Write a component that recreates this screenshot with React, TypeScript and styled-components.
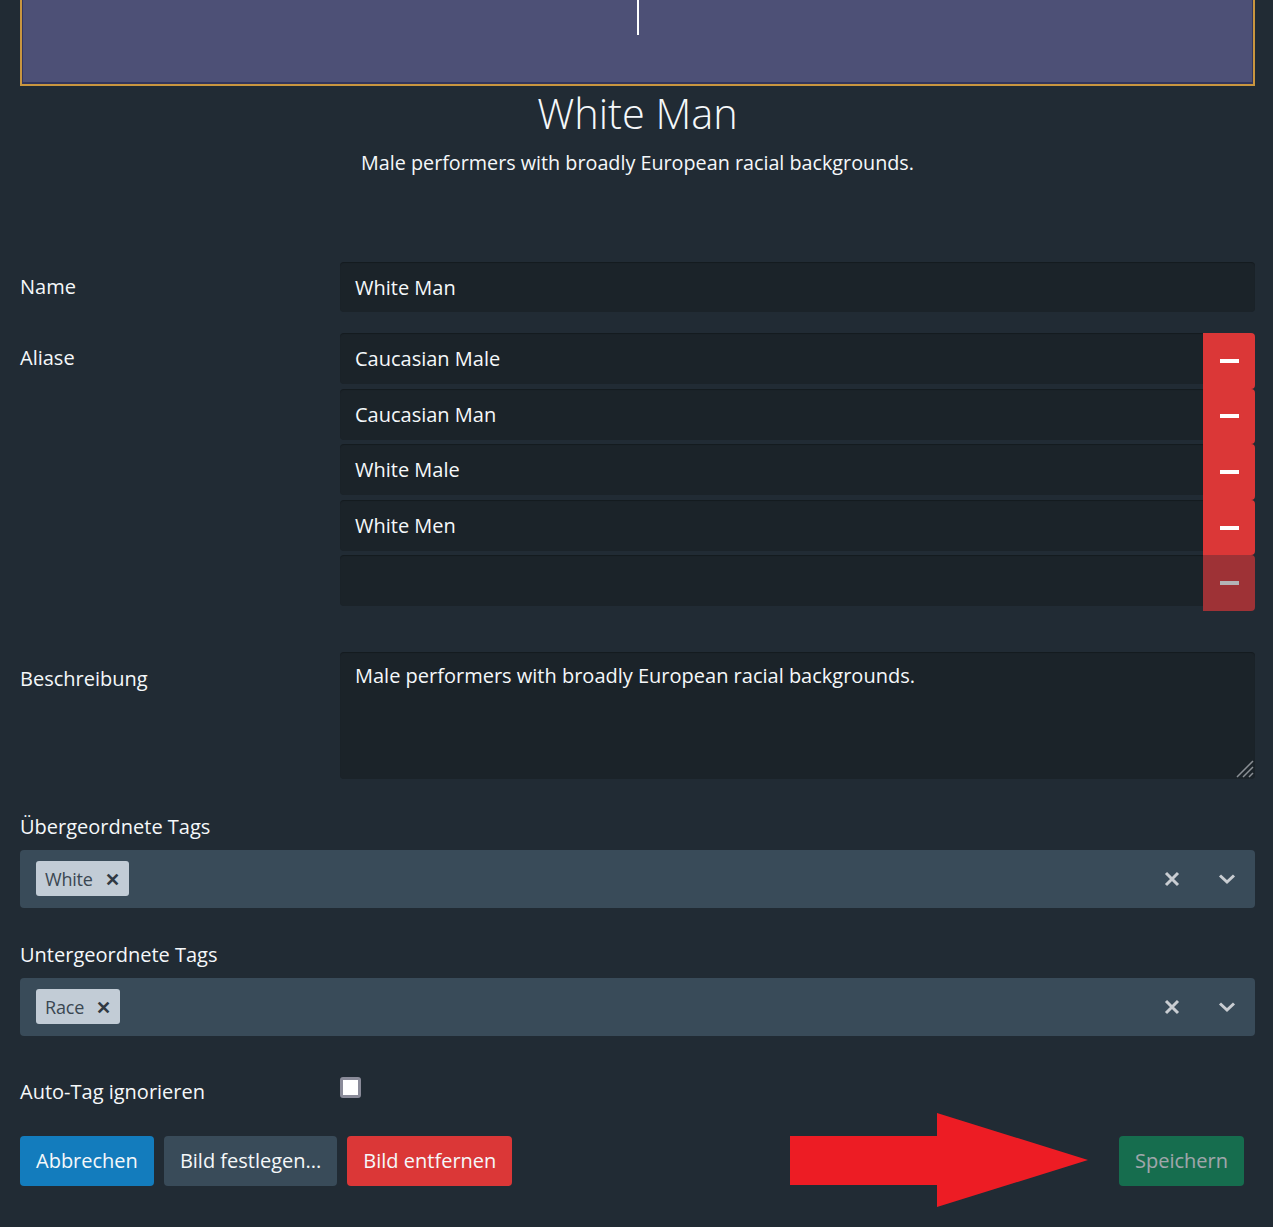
import React from "react";
import styled, { createGlobalStyle } from "styled-components";

const Global = createGlobalStyle`
  html, body { margin: 0; padding: 0; background: #212b34; }
  body { font-family: "Open Sans", "Noto Sans", sans-serif; color: #f5f8fa; }
`;

const Page = styled.div`
  width: 1273px;
  height: 1227px;
  box-sizing: border-box;
  padding: 0 18px 0 20px;
  overflow: hidden;
  font-size: 20px;
`;

const Banner = styled.div`
  height: 86px;
  box-sizing: border-box;
  background: #4d5076;
  border: 2px solid #c9963f;
  border-top: none;
  box-shadow: inset 0 -2px 0 #33365c, inset 1px 0 0 #33365c, inset -1px 0 0 #33365c;
  display: flex;
  justify-content: center;
`;

const Caret = styled.div`
  width: 2px;
  height: 35px;
  background: #ffffff;
`;

const Title = styled.h2`
  margin: 3px 0 0;
  text-align: center;
  font-size: 41.5px;
  line-height: 48px;
  font-weight: 300;
`;

const Lead = styled.p`
  margin: 11px 0 0;
  text-align: center;
  font-size: 19.75px;
  line-height: 30px;
`;

const Form = styled.div`
  margin-top: 84px;
  display: flex;
  flex-direction: column;
`;

const Row = styled.div<{ $mb: number }>`
  display: grid;
  grid-template-columns: 320px 1fr;
  margin-bottom: ${(p) => p.$mb}px;
`;

const Label = styled.div<{ $pt?: number }>`
  padding-top: ${(p) => p.$pt ?? 10}px;
  font-size: 20px;
  line-height: 30px;
`;

const Input = styled.div`
  height: 50px;
  box-sizing: border-box;
  background: #1b2329;
  border-radius: 4px;
  box-shadow: inset 0 1px 1px rgba(0, 0, 0, 0.25);
  padding: 0 15px;
  display: flex;
  align-items: center;
  font-size: 20px;
  flex: 1;
`;

const AliasList = styled.div`
  display: flex;
  flex-direction: column;
`;

const AliasRow = styled.div`
  display: flex;
  height: 55.6px;
  align-items: flex-start;
`;

const AliasInput = styled(Input)`
  height: 51px;
  border-radius: 4px 0 0 4px;
`;

const RemoveBtn = styled.div<{ $disabled?: boolean }>`
  width: 52px;
  height: 100%;
  background: ${(p) => (p.$disabled ? "#9e3236" : "#db3737")};
  border-radius: 0 4px 4px 0;
  display: flex;
  align-items: center;
  justify-content: center;
`;

const Minus = styled.div<{ $disabled?: boolean }>`
  width: 19px;
  height: 4px;
  background: ${(p) => (p.$disabled ? "#b3b3b6" : "#ffffff")};
`;

const TextArea = styled.div`
  height: 127px;
  box-sizing: border-box;
  background: #1b2329;
  border-radius: 4px;
  box-shadow: inset 0 1px 1px rgba(0, 0, 0, 0.25);
  padding: 9px 15px;
  font-size: 20px;
  line-height: 30px;
  position: relative;
`;

const Grip = styled.svg`
  position: absolute;
  right: 1px;
  bottom: 1px;
`;

const Stack = styled.div<{ $mb: number }>`
  display: flex;
  flex-direction: column;
  margin-bottom: ${(p) => p.$mb}px;
`;

const StackLabel = styled.div`
  font-size: 20px;
  line-height: 30px;
  margin-bottom: 8px;
`;

const Select = styled.div`
  height: 58px;
  box-sizing: border-box;
  background: #394b59;
  border-radius: 4px;
  display: flex;
  align-items: center;
  padding: 0 16px;
`;

const Chip = styled.div`
  height: 35px;
  box-sizing: border-box;
  background: #c2ccd6;
  border-radius: 3px;
  color: #3a4752;
  display: flex;
  align-items: center;
  gap: 12px;
  padding: 0 9px 0 9px;
  font-size: 18px;
  letter-spacing: -0.2px;
`;

const ChipX = styled.span`
  font-size: 18px;
  font-weight: 700;
  color: #2f3942;
`;

const SelectIcons = styled.div`
  margin-left: auto;
  display: flex;
  align-items: center;
  gap: 38px;
  padding-right: 3px;
`;

const CheckRow = styled.div`
  display: grid;
  grid-template-columns: 320px 1fr;
  margin-bottom: 29px;
`;

const Checkbox = styled.div`
  width: 21px;
  height: 21px;
  box-sizing: border-box;
  border: 3px solid #8a8b99;
  background: #ffffff;
  border-radius: 3px;
`;

const Buttons = styled.div`
  display: flex;
  align-items: center;
  gap: 10px;
  height: 50px;
`;

const Btn = styled.div<{ $bg: string; $dim?: boolean }>`
  height: 50px;
  box-sizing: border-box;
  padding: 0 16px;
  background: ${(p) => p.$bg};
  border-radius: 4px;
  display: flex;
  align-items: center;
  font-size: 20px;
  color: #f5f8fa;
  opacity: ${(p) => (p.$dim ? 0.6 : 1)};
`;

const Spacer = styled.div`
  flex: 1;
`;

const Arrow = styled.svg`
  margin: -23px 21px -21px 0;
  flex: none;
`;

const SaveWrap = styled.div`
  margin-right: 11px;
`;

const XIcon = () => (
  <svg width="16" height="16" viewBox="0 0 16 16">
    <path d="M2 2 L14 14 M14 2 L2 14" stroke="#c9cdd2" strokeWidth="3" strokeLinecap="butt" />
  </svg>
);

const Chevron = () => (
  <svg width="18" height="12" viewBox="0 0 18 12">
    <path d="M2 2.5 L9 9 L16 2.5" stroke="#c9cdd2" strokeWidth="3" fill="none" />
  </svg>
);

const aliases = ["Caucasian Male", "Caucasian Man", "White Male", "White Men", ""];

export default function App() {
  return (
    <>
      <Global />
      <Page>
        <Banner>
          <Caret />
        </Banner>
        <Title>White Man</Title>
        <Lead>Male performers with broadly European racial backgrounds.</Lead>
        <Form>
          <Row $mb={21}>
            <Label>Name</Label>
            <Input>White Man</Input>
          </Row>
          <Row $mb={41}>
            <Label>Aliase</Label>
            <AliasList>
              {aliases.map((a, i) => (
                <AliasRow key={i}>
                  <AliasInput>{a}</AliasInput>
                  <RemoveBtn $disabled={a === ""}>
                    <Minus $disabled={a === ""} />
                  </RemoveBtn>
                </AliasRow>
              ))}
            </AliasList>
          </Row>
          <Row $mb={33}>
            <Label $pt={12}>Beschreibung</Label>
            <TextArea>
              Male performers with broadly European racial backgrounds.
              <Grip width="22" height="22" viewBox="0 0 22 22">
                <path d="M21 5 L5 21 M21 11 L11 21 M21 17 L17 21" stroke="#8a8f94" strokeWidth="1.5" />
              </Grip>
            </TextArea>
          </Row>
          <Stack $mb={32}>
            <StackLabel>Übergeordnete Tags</StackLabel>
            <Select>
              <Chip>
                White <ChipX>✕</ChipX>
              </Chip>
              <SelectIcons>
                <XIcon />
                <Chevron />
              </SelectIcons>
            </Select>
          </Stack>
          <Stack $mb={41}>
            <StackLabel>Untergeordnete Tags</StackLabel>
            <Select>
              <Chip>
                Race <ChipX>✕</ChipX>
              </Chip>
              <SelectIcons>
                <XIcon />
                <Chevron />
              </SelectIcons>
            </Select>
          </Stack>
          <CheckRow>
            <Label $pt={0}>Auto-Tag ignorieren</Label>
            <Checkbox />
          </CheckRow>
          <Buttons>
            <Btn $bg="#137cbd">Abbrechen</Btn>
            <Btn $bg="#394b59">Bild festlegen...</Btn>
            <Btn $bg="#db3737">Bild entfernen</Btn>
            <Spacer />
            <Arrow width="298" height="94" viewBox="0 0 298 94">
              <path d="M0 23 L147 23 L147 0 L298 47 L147 94 L147 72 L0 72 Z" fill="#ed1c24" />
            </Arrow>
            <SaveWrap>
              <Btn $bg="#0f9960" $dim>
                Speichern
              </Btn>
            </SaveWrap>
          </Buttons>
        </Form>
      </Page>
    </>
  );
}
